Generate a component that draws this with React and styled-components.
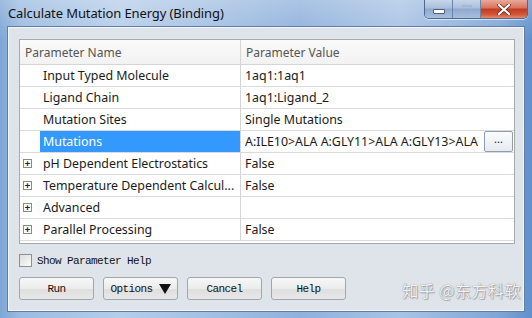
import React from 'react';
import styled, { createGlobalStyle } from 'styled-components';

const GlobalStyle = createGlobalStyle`
  html, body {
    margin: 0;
    padding: 0;
    width: 532px;
    height: 318px;
    overflow: hidden;
    background: #6d9bd1;
  }
`;

const rows = [
  { name: 'Input Typed Molecule', value: '1aq1:1aq1' },
  { name: 'Ligand Chain', value: '1aq1:Ligand_2' },
  { name: 'Mutation Sites', value: 'Single Mutations' },
  { name: 'Mutations', value: 'A:ILE10>ALA A:GLY11>ALA A:GLY13>ALA', selected: true, browse: true },
  { name: 'pH Dependent Electrostatics', value: 'False', group: true },
  { name: 'Temperature Dependent Calcul...', value: 'False', group: true },
  { name: 'Advanced', value: '', group: true },
  { name: 'Parallel Processing', value: 'False', group: true },
];

function App() {
  return (
    <Window>
      <GlobalStyle />
      <TitleBar>
        <Title>Calculate Mutation Energy (Binding)</Title>
        <Controls>
          <CtlButton>
            <MinGlyph />
          </CtlButton>
          <CtlButton>
            <MaxGlyph />
          </CtlButton>
          <CloseButton>
            <svg width="14" height="11" viewBox="0 0 14 11">
              <path d="M2 1 L12 10 M12 1 L2 10" stroke="#5a2a20" strokeWidth="3.6" strokeLinecap="round" />
              <path d="M2 1 L12 10 M12 1 L2 10" stroke="#fff" strokeWidth="2.2" strokeLinecap="round" />
            </svg>
          </CloseButton>
        </Controls>
      </TitleBar>
      <Client>
        <Grid>
          <HeaderRow>
            <HeadCell>Parameter Name</HeadCell>
            <HeadCell $value>Parameter Value</HeadCell>
          </HeaderRow>
          {rows.map((r) => (
            <Row key={r.name}>
              <NameCell>
                <Expander>{r.group && <PlusBox>+</PlusBox>}</Expander>
                <NameText $selected={r.selected}>{r.name}</NameText>
              </NameCell>
              <ValueCell>
                <ValueText>{r.value}</ValueText>
                {r.browse && <BrowseButton>...</BrowseButton>}
              </ValueCell>
            </Row>
          ))}
        </Grid>
        <CheckRow>
          <CheckBox />
          <MonoLabel>Show Parameter Help</MonoLabel>
        </CheckRow>
        <ButtonRow>
          <Button>Run</Button>
          <Button>
            Options
            <Arrow />
          </Button>
          <Button>Cancel</Button>
          <Button>Help</Button>
        </ButtonRow>
        <Watermark>知乎 @东方科软</Watermark>
      </Client>
    </Window>
  );
}

export default App;

const Window = styled.div`
  width: 532px;
  height: 318px;
  display: flex;
  flex-direction: column;
  box-sizing: border-box;
  background:
    linear-gradient(180deg, rgba(255,255,255,0.25) 0px, rgba(255,255,255,0) 40px),
    linear-gradient(90deg, #7ea6d6 0px, #9bbbe0 20px, #b6cde9 120px, #a6c1e3 200px, #8fb1dc 300px, #a9c3e4 400px, #7fa5d6 500px, #5f8fca 532px);
  font-family: "Noto Sans", "Noto Sans CJK SC", sans-serif;
`;

const TitleBar = styled.div`
  height: 26px;
  display: flex;
  align-items: flex-start;
  padding-left: 8px;
  padding-right: 4px;
`;

const Title = styled.div`
  font-family: "Noto Sans", sans-serif;
  font-size: 13px;
  color: #111;
  line-height: 26px;
  letter-spacing: -0.1px;
`;

const Controls = styled.div`
  margin-left: auto;
  display: flex;
  height: 18px;
  border: 1px solid #4d6a92;
  border-top: none;
  border-radius: 0 0 5px 5px;
  overflow: hidden;
  box-shadow: 0 1px 0 rgba(255,255,255,0.6);
`;

const CtlButton = styled.div`
  width: 27px;
  height: 18px;
  display: flex;
  align-items: center;
  justify-content: center;
  background: linear-gradient(180deg, #c6d6ea 0%, #a9bfdb 45%, #8ea9cf 50%, #a7bfde 100%);
  border-right: 1px solid #6a84aa;
`;

const MinGlyph = styled.div`
  width: 10px;
  height: 3px;
  margin-top: 5px;
  background: #fff;
  border: 1px solid #4d5f7a;
  border-radius: 1px;
`;

const MaxGlyph = styled.div`
  width: 8px;
  height: 6px;
  border: 1px solid #9fb2cb;
  border-top-width: 2px;
  background: transparent;
  opacity: 0.7;
`;

const CloseButton = styled.div`
  width: 46px;
  height: 18px;
  display: flex;
  align-items: center;
  justify-content: center;
  background: linear-gradient(180deg, #e9a99a 0%, #d7725d 45%, #c2391f 50%, #d4553a 80%, #e48a6c 100%);
`;

const Client = styled.div`
  position: relative;
  flex: 1;
  margin: 0 7px 6px 7px;
  border: 1px solid #5f7da6;
  background: #dfe4eb;
  box-shadow: inset 0 0 0 1px #f3f6fa;
  padding: 12px 9px 0 11px;
  display: flex;
  flex-direction: column;
`;

const Grid = styled.div`
  border: 1px solid #a9a9a9;
  background: #fff;
  display: flex;
  flex-direction: column;
  padding-bottom: 2px;
`;

const HeaderRow = styled.div`
  display: grid;
  grid-template-columns: 220px 1fr;
  height: 24px;
  border-bottom: 1px solid #d5d5d5;
  background: linear-gradient(180deg, #fafafa, #f2f2f2);
`;

const HeadCell = styled.div`
  font-size: 12px;
  color: #555;
  line-height: 24px;
  padding-top: 1px;
  padding-left: 5px;
  border-left: ${(p) => (p.$value ? '1px solid #d5d5d5' : 'none')};
`;

const Row = styled.div`
  display: grid;
  grid-template-columns: 220px 1fr;
  height: 21px;
  border-bottom: 1px solid #dadada;
`;

const NameCell = styled.div`
  display: flex;
  align-items: stretch;
  overflow: hidden;
`;

const Expander = styled.div`
  width: 20px;
  flex: none;
  display: flex;
  align-items: center;
  padding-left: 3px;
  box-sizing: border-box;
`;

const PlusBox = styled.div`
  width: 7px;
  height: 7px;
  border: 1px solid #8a8a8a;
  font-family: "DejaVu Sans Mono", monospace;
  font-size: 9px;
  line-height: 7px;
  text-align: center;
  color: #222;
  font-weight: bold;
  background: #fff;
`;

const NameText = styled.div`
  flex: 1;
  font-size: 12.4px;
  line-height: 20px;
  padding-top: 1px;
  padding-left: 3px;
  white-space: nowrap;
  color: ${(p) => (p.$selected ? '#fff' : '#1a1a1a')};
  background: ${(p) => (p.$selected ? '#3399ff' : 'transparent')};
`;

const ValueCell = styled.div`
  display: flex;
  align-items: center;
  border-left: 1px solid #d5d5d5;
  overflow: hidden;
  padding-right: 1px;
`;

const ValueText = styled.div`
  flex: 1;
  min-width: 0;
  font-size: 12.4px;
  line-height: 20px;
  padding-top: 1px;
  padding-left: 4px;
  white-space: nowrap;
  overflow: hidden;
  color: #1a1a1a;
`;

const BrowseButton = styled.div`
  flex: none;
  width: 27px;
  height: 19px;
  border: 1px solid #8d9db4;
  border-radius: 2px;
  background: linear-gradient(180deg, #fbfcfd, #e6ebf1);
  font-size: 11px;
  line-height: 13px;
  text-align: center;
  color: #222;
`;

const CheckRow = styled.div`
  display: flex;
  align-items: center;
  margin-top: 10px;
  height: 13px;
  gap: 5px;
`;

const CheckBox = styled.div`
  width: 11px;
  height: 11px;
  border: 1px solid #8f8f8f;
  background: linear-gradient(135deg, #dcdcdc, #fbfbfb);
`;

const MonoLabel = styled.div`
  font-family: "Liberation Mono", monospace;
  font-size: 11px;
  letter-spacing: -0.6px;
  color: #111;
`;

const ButtonRow = styled.div`
  display: flex;
  gap: 9px;
  margin-top: 10px;
`;

const Button = styled.div`
  width: 73px;
  height: 21px;
  border: 1px solid #a0a6ad;
  border-radius: 3px;
  background: linear-gradient(180deg, #f7f7f7 0%, #ececec 50%, #dedede 51%, #e8e8e8 100%);
  display: flex;
  align-items: center;
  justify-content: center;
  gap: 6px;
  font-family: "Liberation Mono", monospace;
  font-size: 11px;
  letter-spacing: -0.6px;
  color: #111;
`;

const Arrow = styled.div`
  width: 0;
  height: 0;
  border-left: 6px solid transparent;
  border-right: 6px solid transparent;
  border-top: 10px solid #111;
`;

const Watermark = styled.div`
  position: absolute;
  right: 3px;
  bottom: 9px;
  font-family: "Noto Sans CJK SC", sans-serif;
  font-size: 16px;
  letter-spacing: 0.5px;
  color: rgba(255, 255, 255, 0.92);
  text-shadow: 0 0 1px rgba(80, 80, 80, 0.8), 1px 1px 1px rgba(120, 120, 120, 0.5);
`;
